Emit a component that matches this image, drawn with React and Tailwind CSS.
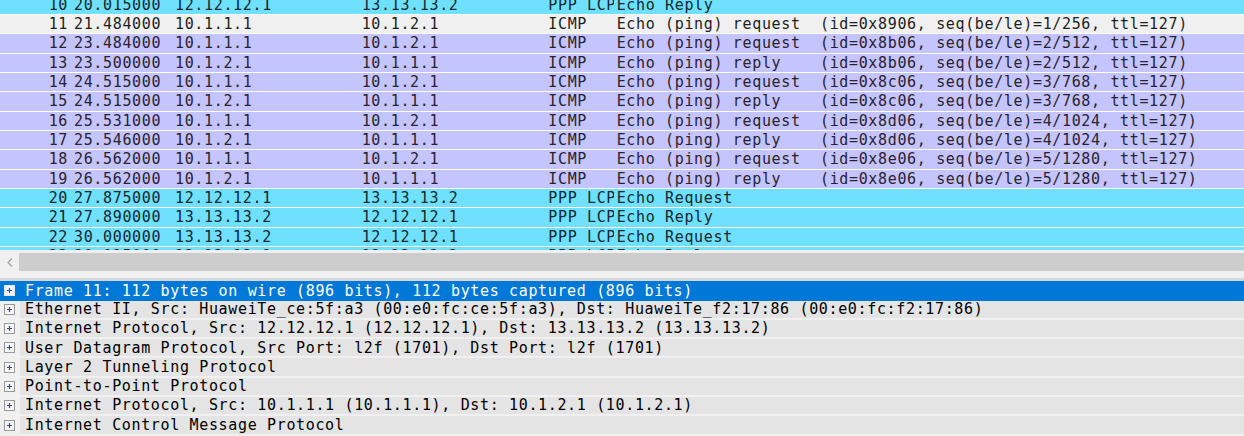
import React from 'react';

const packets = [
    ['10', '20.015000', '12.12.12.1', '13.13.13.2', 'PPP LCP', 'Echo Reply', 'ppp'],
    ['11', '21.484000', '10.1.1.1', '10.1.2.1', 'ICMP', 'Echo (ping) request  (id=0x8906, seq(be/le)=1/256, ttl=127)', 'sel'],
    ['12', '23.484000', '10.1.1.1', '10.1.2.1', 'ICMP', 'Echo (ping) request  (id=0x8b06, seq(be/le)=2/512, ttl=127)', 'icmp'],
    ['13', '23.500000', '10.1.2.1', '10.1.1.1', 'ICMP', 'Echo (ping) reply    (id=0x8b06, seq(be/le)=2/512, ttl=127)', 'icmp'],
    ['14', '24.515000', '10.1.1.1', '10.1.2.1', 'ICMP', 'Echo (ping) request  (id=0x8c06, seq(be/le)=3/768, ttl=127)', 'icmp'],
    ['15', '24.515000', '10.1.2.1', '10.1.1.1', 'ICMP', 'Echo (ping) reply    (id=0x8c06, seq(be/le)=3/768, ttl=127)', 'icmp'],
    ['16', '25.531000', '10.1.1.1', '10.1.2.1', 'ICMP', 'Echo (ping) request  (id=0x8d06, seq(be/le)=4/1024, ttl=127)', 'icmp'],
    ['17', '25.546000', '10.1.2.1', '10.1.1.1', 'ICMP', 'Echo (ping) reply    (id=0x8d06, seq(be/le)=4/1024, ttl=127)', 'icmp'],
    ['18', '26.562000', '10.1.1.1', '10.1.2.1', 'ICMP', 'Echo (ping) request  (id=0x8e06, seq(be/le)=5/1280, ttl=127)', 'icmp'],
    ['19', '26.562000', '10.1.2.1', '10.1.1.1', 'ICMP', 'Echo (ping) reply    (id=0x8e06, seq(be/le)=5/1280, ttl=127)', 'icmp'],
    ['20', '27.875000', '12.12.12.1', '13.13.13.2', 'PPP LCP', 'Echo Request', 'ppp'],
    ['21', '27.890000', '13.13.13.2', '12.12.12.1', 'PPP LCP', 'Echo Reply', 'ppp'],
    ['22', '30.000000', '13.13.13.2', '12.12.12.1', 'PPP LCP', 'Echo Request', 'ppp'],
    ['23', '30.015000', '12.12.12.1', '13.13.13.2', 'PPP LCP', 'Echo Reply', 'ppp'],
];

const rowStyles = {
    ppp: 'bg-[#70e0ff] text-[#12272e]',
    icmp: 'bg-[#c4c4ff] text-[#2a2230]',
    sel: 'bg-[#f0f0f0] text-[#1e1e1e]',
};

const details = [
    'Frame 11: 112 bytes on wire (896 bits), 112 bytes captured (896 bits)',
    'Ethernet II, Src: HuaweiTe_ce:5f:a3 (00:e0:fc:ce:5f:a3), Dst: HuaweiTe_f2:17:86 (00:e0:fc:f2:17:86)',
    'Internet Protocol, Src: 12.12.12.1 (12.12.12.1), Dst: 13.13.13.2 (13.13.13.2)',
    'User Datagram Protocol, Src Port: l2f (1701), Dst Port: l2f (1701)',
    'Layer 2 Tunneling Protocol',
    'Point-to-Point Protocol',
    'Internet Protocol, Src: 10.1.1.1 (10.1.1.1), Dst: 10.1.2.1 (10.1.2.1)',
    'Internet Control Message Protocol',
];

function PlusBox({ selected }) {
    return (
        <svg width="11" height="11" viewBox="0 0 11 11" className="shrink-0">
            <rect x="0.5" y="0.5" width="10" height="10" fill={selected ? '#eef4fb' : '#f7f7f7'} stroke={selected ? '#dfe8f3' : '#9a9a9a'} />
            <path d="M3 5.5h5M5.5 3v5" stroke={selected ? '#1f5fa8' : '#3b4f7a'} strokeWidth="1.2" />
        </svg>
    );
}

export default function App() {
    return (
        <div className="w-[1244px] h-[436px] overflow-hidden bg-[#f0f0f0] font-['DejaVu_Sans_Mono',monospace] text-[15px] tracking-[0.65px]">
            {/* packet list */}
            <div className="h-[250px] overflow-hidden bg-white">
                <div className="mt-[-4.3px]">
                    {packets.map(([no, time, src, dst, proto, info, kind]) => (
                        <div key={no} className={`flex items-center h-[19.35px] border-b border-white whitespace-nowrap ${rowStyles[kind]}`}>
                            <div className="w-[68px] text-right shrink-0">{no}</div>
                            <div className="w-[107px] pl-[6px] shrink-0">{time}</div>
                            <div className="w-[186.7px] shrink-0">{src}</div>
                            <div className="w-[186.6px] shrink-0">{dst}</div>
                            <div className="w-[65.5px] overflow-hidden shrink-0">{proto}</div>
                            <div className="ml-[2.9px] whitespace-pre">{info}</div>
                        </div>
                    ))}
                </div>
            </div>

            {/* horizontal scrollbar */}
            <div className="mt-[3.3px] flex h-[18px]">
                <div className="w-[19px] flex items-center justify-center bg-[#f0f0f0]">
                    <svg width="6" height="9" viewBox="0 0 6 9">
                        <path d="M5 0.5L1 4.5L5 8.5" fill="none" stroke="#a8a8a8" strokeWidth="1.4" />
                    </svg>
                </div>
                <div className="flex-1 bg-[#cdcdcd]" />
            </div>

            <div className="h-[7px]" />
            <div className="h-[3px] bg-[#d6d6d6]" />

            {/* packet details */}
            <div>
                {details.map((text, i) => {
                    const selected = i === 0;
                    return (
                        <div key={i} className={`flex h-[19.3px] whitespace-nowrap ${selected ? 'bg-[#0078d7] text-white' : 'border-b-2 border-[#f0f0f0] text-black'}`}>
                            <div className={`w-[20px] flex items-center pl-[4px] ${selected ? '' : 'bg-[#f0f0f0]'}`}>
                                <PlusBox selected={selected} />
                            </div>
                            <div className={`flex-1 flex items-center pl-[5px] ${selected ? '' : 'bg-[#e4e4e4]'}`}>{text}</div>
                        </div>
                    );
                })}
            </div>
        </div>
    );
}
